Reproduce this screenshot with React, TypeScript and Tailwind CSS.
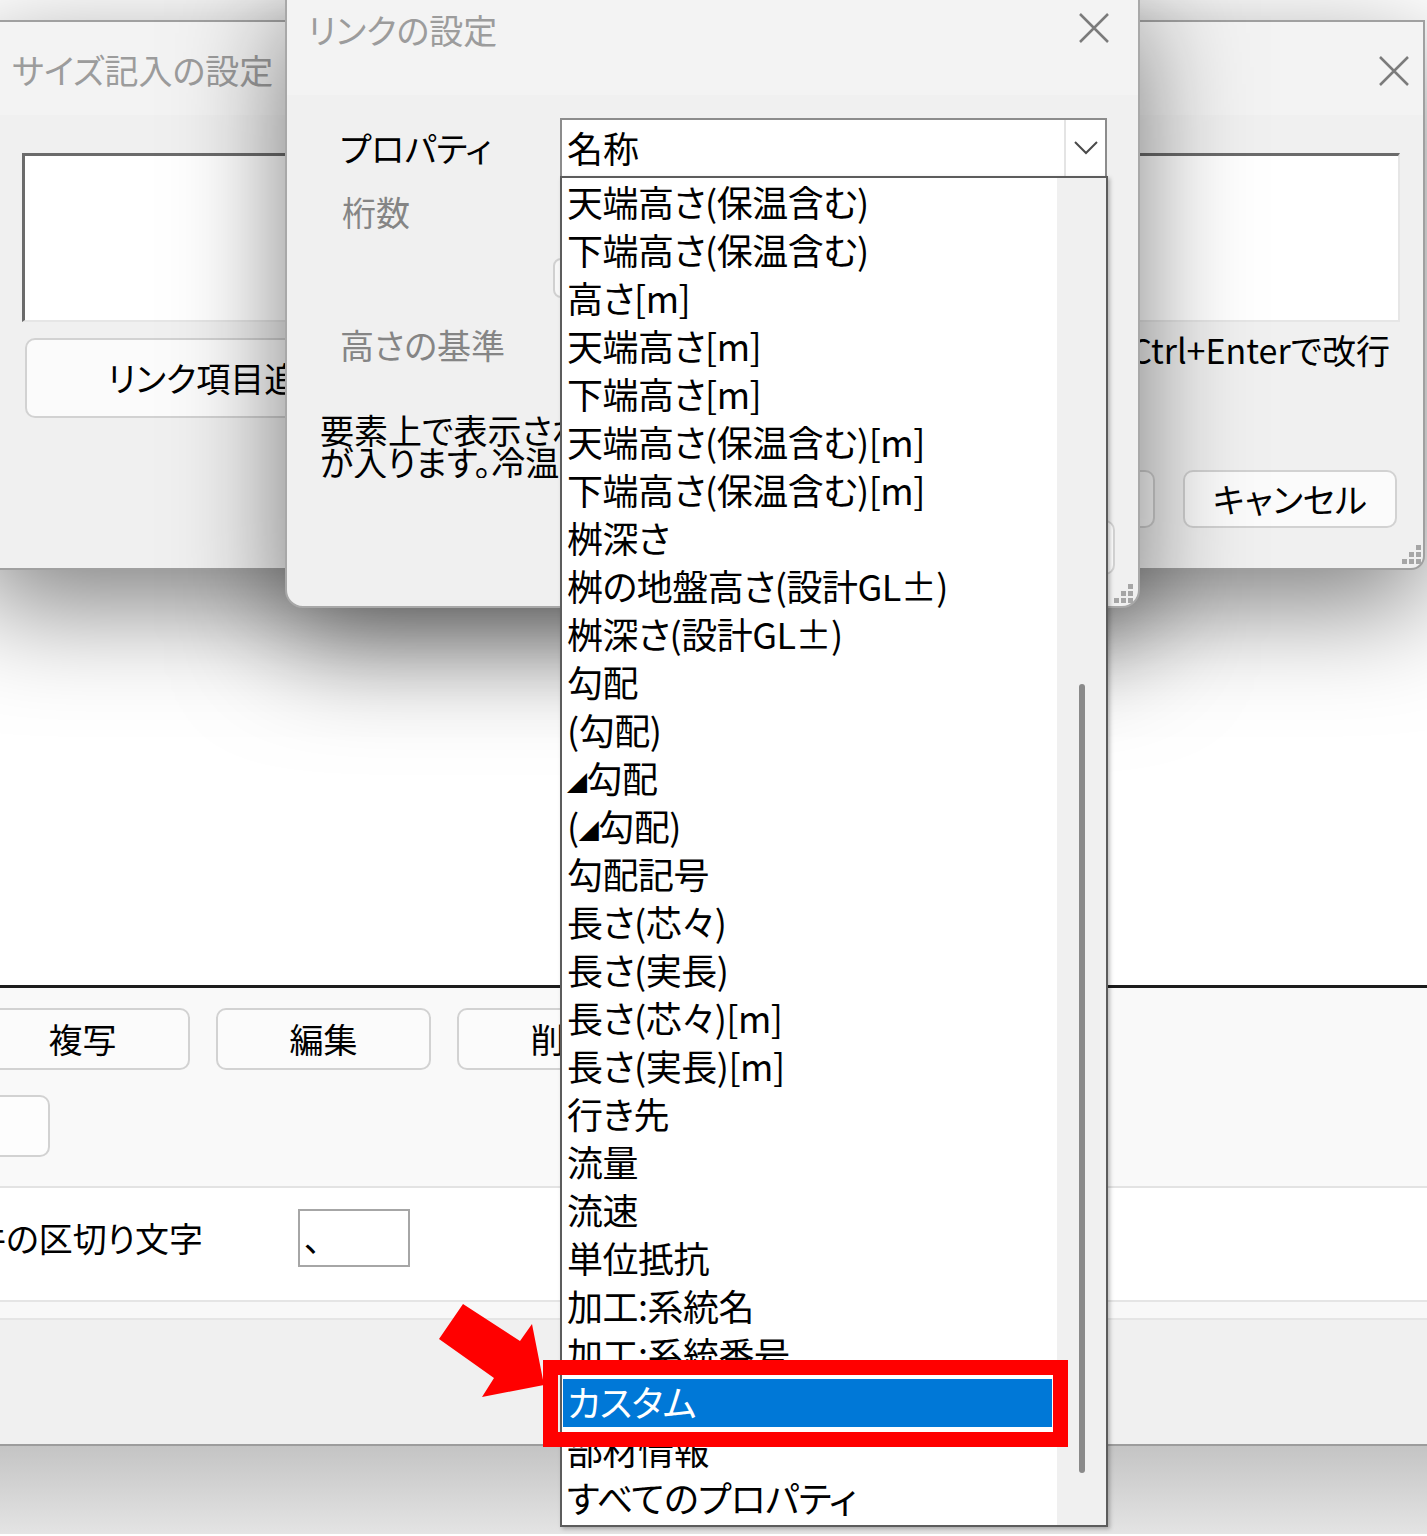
import React from "react";

const items = [
  "天端高さ(保温含む)",
  "下端高さ(保温含む)",
  "高さ[m]",
  "天端高さ[m]",
  "下端高さ[m]",
  "天端高さ(保温含む)[m]",
  "下端高さ(保温含む)[m]",
  "桝深さ",
  "桝の地盤高さ(設計GL±)",
  "桝深さ(設計GL±)",
  "勾配",
  "(勾配)",
  "◢勾配",
  "(◢勾配)",
  "勾配記号",
  "長さ(芯々)",
  "長さ(実長)",
  "長さ(芯々)[m]",
  "長さ(実長)[m]",
  "行き先",
  "流量",
  "流速",
  "単位抵抗",
  "加工:系統名",
  "加工:系統番号",
  "カスタム",
  "部材情報",
  "すべてのプロパティ",
];

const selected = "カスタム";

// the slope wedge is drawn much smaller than the text around it
function ItemText({ text }: { text: string }) {
  const parts = text.split("◢");
  if (parts.length === 1) return <>{text}</>;
  return (
    <>
      {parts[0]}
      <span className="text-[20px] align-[2px]">◢</span>
      {parts[1]}
    </>
  );
}

function CloseIcon({ className }: { className?: string }) {
  return (
    <svg width="32" height="32" viewBox="0 0 32 32" className={className}>
      <path d="M2 2 L30 30 M30 2 L2 30" stroke="#7b7b7b" strokeWidth="2.5" fill="none" />
    </svg>
  );
}

function Grip({ className }: { className?: string }) {
  const dots = [
    [14, 0],
    [7, 7],
    [14, 7],
    [0, 14],
    [7, 14],
    [14, 14],
  ];
  return (
    <svg width="19" height="19" viewBox="0 0 19 19" className={className}>
      {dots.map(([x, y], i) => (
        <rect key={i} x={x} y={y} width="5" height="5" fill="#a6a6a6" />
      ))}
    </svg>
  );
}

function WinButton({ label, className }: { label: string; className?: string }) {
  return (
    <div
      className={`flex items-center justify-center rounded-[10px] border-2 border-[#d2d2d2] bg-[#fbfbfb] text-[34px] leading-none ${className ?? ""}`}
    >
      {label}
    </div>
  );
}

export default function App() {
  return (
    <div className="relative w-[1427px] h-[1536px] overflow-hidden bg-white text-black font-['Noto_Sans_CJK_JP',sans-serif] [font-feature-settings:'palt']">
      {/* Main window behind the dialogs */}
      <div className="h-[985px] bg-white" />
      <div className="h-[201px] border-t-[3px] border-[#1c1c1c] bg-[#f9f9f9] flex flex-col">
        <div className="mt-[20px] flex gap-[26px] ml-[-25px]">
          <WinButton label="複写" className="w-[215px] h-[62px]" />
          <WinButton label="編集" className="w-[215px] h-[62px]" />
          <WinButton label="削除" className="w-[215px] h-[62px]" />
        </div>
        <div className="mt-[25px] ml-[-50px] w-[100px] h-[62px] rounded-[10px] border-2 border-[#d2d2d2] bg-[#fdfdfd]" />
      </div>
      <div className="h-[114px] pb-[12px] border-t-2 border-[#e3e3e3] bg-white flex items-center">
        <span className="ml-[-28px] w-[326px] text-[34px] leading-none whitespace-nowrap">件の区切り文字</span>
        <div className="w-[112px] h-[58px] border-2 border-[#a6a6a6] bg-white pl-[4px] text-[34px] leading-[54px]">、</div>
      </div>
      <div className="h-[18px] border-t-2 border-[#e5e5e5] bg-[#f8f8f8]" />
      <div className="h-[128px] border-t-2 border-b-2 border-t-[#e5e5e5] border-b-[#9c9c9c] bg-[#f0f0f0]" />
      <div className="h-[88px] bg-gradient-to-b from-[#c4c4c4] to-[#e4e4e4]" />

      {/* サイズ記入の設定 dialog */}
      <div className="absolute left-[-20px] top-[20px] w-[1445px] h-[550px] rounded-br-[14px] border-2 border-[#a0a0a0] bg-[#f0f0f0] shadow-[0_36px_110px_rgba(0,0,0,0.5)] flex flex-col">
        <div className="h-[93px] bg-[#f3f3f3] flex items-start justify-between pl-[30px] pr-[13px]">
          <span className="mt-[28px] text-[34px] leading-[40px] text-[#9c9c9c]">サイズ記入の設定</span>
          <CloseIcon className="mt-[33px]" />
        </div>
        <div className="mt-[38px] ml-[40px] w-[1378px] h-[169px] bg-white border-t-[3px] border-l-[3px] border-r-2 border-b-2 border-t-[#6b6b6b] border-l-[#6b6b6b] border-r-[#e6e6e6] border-b-[#e6e6e6]" />
        <div className="mt-[16px] flex items-start justify-between pl-[43px] pr-[33px]">
          <WinButton label="リンク項目追加" className="w-[390px] h-[80px]" />
          <span className="text-[34px] leading-[24px] whitespace-nowrap">Ctrl+Enterで改行</span>
        </div>
        <div className="mt-[52px] flex justify-end gap-[28px] pr-[26px]">
          <WinButton label="OK" className="w-[214px] h-[58px]" />
          <WinButton label="キャンセル" className="w-[214px] h-[58px]" />
        </div>
        <Grip className="absolute right-[2px] bottom-[4px]" />
      </div>

      {/* リンクの設定 dialog */}
      <div className="absolute left-[285px] top-[-20px] w-[855px] h-[628px] rounded-b-[18px] border-2 border-[#a8a8a8] bg-[#f0f0f0] shadow-[0_36px_110px_rgba(0,0,0,0.5)] flex flex-col">
        <div className="h-[113px] bg-[#f3f3f3] flex items-start justify-between pl-[21px] pr-[28px]">
          <span className="mt-[28px] text-[34px] leading-[40px] text-[#9c9c9c]">リンクの設定</span>
          <CloseIcon className="mt-[30px]" />
        </div>
        <div className="flex flex-col pl-[53px]">
          <div className="mt-[23px] flex items-center h-[60px]">
            <span className="w-[220px] text-[34px] leading-none">プロパティ</span>
            <div className="w-[547px] h-[60px] border-2 border-[#8c8c8c] bg-white flex">
              <span className="flex-1 pl-[5px] text-[36px] leading-[54px]">名称</span>
              <div className="w-[41px] border-l-2 border-[#e4e4e4] flex items-center justify-center">
                <svg width="24" height="14" viewBox="0 0 24 14">
                  <path d="M1 1 L12 12 L23 1" stroke="#4a4a4a" strokeWidth="2" fill="none" />
                </svg>
              </div>
            </div>
          </div>
          <div className="mt-[9px] h-[50px] flex items-center">
            <span className="ml-[2px] text-[34px] leading-none text-[#858585]">桁数</span>
          </div>
          <div className="mt-[21px] h-[40px] flex">
            <div className="ml-[213px] w-[200px] h-[40px] rounded-[8px] border-2 border-[#d0d0d0] bg-[#f7f7f7]" />
          </div>
          <div className="mt-[27px] h-[40px] flex items-center">
            <span className="text-[34px] leading-none text-[#858585]">高さの基準</span>
          </div>
          <div className="mt-[49px] ml-[-20px] w-[780px] overflow-hidden whitespace-nowrap text-[34px] leading-[32px]">
            要素上で表示される文字列の｛ ｝の部分にプロパティの値
            <br />
            が入ります。冷温水管などの場合は系統名が入ります。
          </div>
          <div className="mt-[42px] flex justify-end gap-[20px] pr-[23px]">
            <WinButton label="OK" className="w-[214px] h-[55px]" />
            <WinButton label="キャンセル" className="w-[214px] h-[55px]" />
          </div>
        </div>
        <Grip className="absolute right-[5px] bottom-[3px]" />
      </div>

      {/* Open dropdown list */}
      <div className="absolute left-[560px] top-[176px] w-[548px] h-[1351px] border-2 border-[#5c5c5c] bg-white flex shadow-[2px_2px_4px_rgba(0,0,0,0.25)]">
        <div className="w-[495px] flex flex-col pt-[1px] tracking-[-0.5px]">
          {items.map((item) =>
            item === selected ? (
              <div
                key={item}
                className="ml-[1px] mr-[5px] h-[48px] bg-[#0078d7] text-white pl-[4px] text-[36px] leading-[44px] whitespace-nowrap"
              >
                <ItemText text={item} />
              </div>
            ) : (
              <div key={item} className="h-[48px] pl-[5px] text-[36px] leading-[44px] whitespace-nowrap">
                <ItemText text={item} />
              </div>
            )
          )}
        </div>
        <div className="flex-1 bg-[#f0f0f0] flex justify-center pt-[506px]">
          <div className="w-[6px] h-[789px] rounded-full bg-[#8a8a8a]" />
        </div>
      </div>

      {/* Callout arrow */}
      <svg className="absolute left-[430px] top-[1295px]" width="120" height="110" viewBox="0 0 120 110">
        <polygon points="33,9 90,46 102,29 114,90 52,102 64,83 9,44" fill="#ff0000" />
      </svg>
      <div className="absolute left-[543px] top-[1360px] w-[525px] h-[87px] border-[15px] border-[#ff0000]" />
    </div>
  );
}
